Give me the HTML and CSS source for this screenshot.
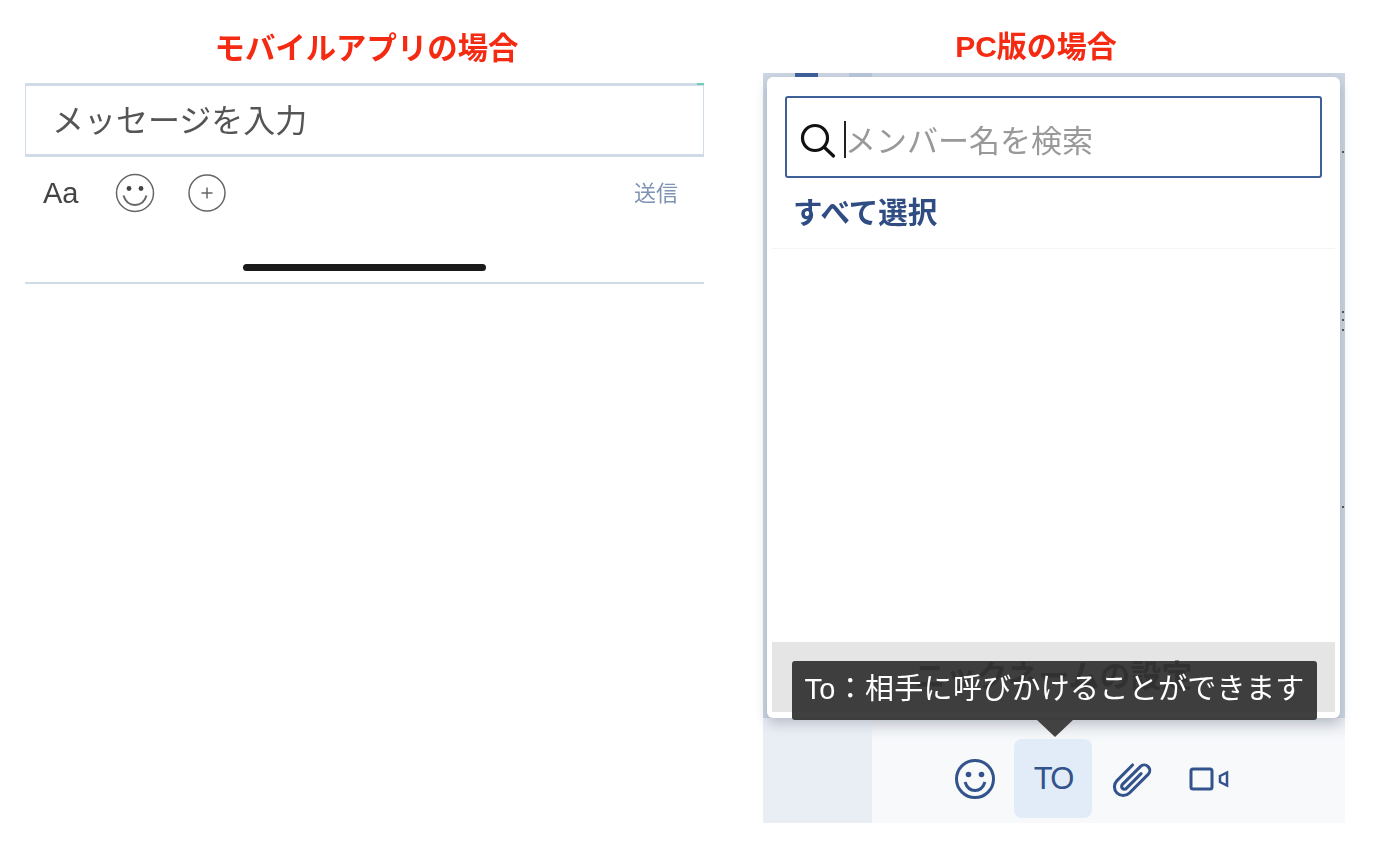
FILE: index.html
```html
<!DOCTYPE html>
<html lang="ja">
<head>
	<meta charset="UTF-8">
	<title>メッセージ入力</title>
	<link rel="stylesheet" href="styles.css">
</head>
<body>
	<div class="page">
		<div class="col col-mobile">
			<h2 class="title">モバイルアプリの場合</h2>
			<div class="mobile">
				<div class="msg-box">メッセージを入力<span class="msg-tick"></span></div>
				<div class="msg-tools">
					<span class="aa">Aa</span>
					<svg class="ico-smile" width="40" height="40" viewBox="0 0 40 40" fill="none" stroke="#666" stroke-width="1.5">
						<circle cx="20" cy="20" r="18.5"/>
						<circle cx="14" cy="15.5" r="2.400" fill="#444" stroke="none"/>
						<circle cx="26" cy="15.5" r="2.400" fill="#444" stroke="none"/>
						<path d="M8.500 22.500c2 6.500 6.500 9.500 11.500 9.500s9.500-3 11.500-9.500" stroke-width="2"/>
					</svg>
					<svg class="ico-plus" width="40" height="40" viewBox="0 0 40 40" fill="none" stroke="#666" stroke-width="1.500">
						<circle cx="20" cy="20" r="18"/>
						<path d="M20 14.500v11M14.500 20h11"/>
					</svg>
					<span class="send">送信</span>
				</div>
				<div class="home-wrap"><div class="home-bar"></div></div>
			</div>
		</div>
		<div class="col col-pc">
			<h2 class="title">PC版の場合</h2>
			<div class="pc">
				<div class="tabs">
					<span class="tab tab-on"></span>
					<span class="tab"></span>
				</div>
				<div class="pc-space"></div>
				<div class="pc-bottom">
					<div class="pc-side"></div>
					<div class="pc-tools">
						<svg class="tool-ico" width="42" height="42" viewBox="0 0 42 42" fill="none" stroke="#33538c" stroke-width="3">
							<circle cx="21" cy="21" r="18.500"/>
							<circle cx="14.500" cy="16.500" r="2.800" fill="#33538c" stroke="none"/>
							<circle cx="27.500" cy="16.500" r="2.800" fill="#33538c" stroke="none"/>
							<path d="M11 24c2 6 6 8.500 10 8.500s8-2.500 10-8.500"/>
						</svg>
						<span class="to-btn">TO</span>
						<svg class="tool-ico ico-clip" width="44" height="44" viewBox="0 0 40 40" fill="none" stroke="#33538c" stroke-width="2.800" stroke-linecap="round">
							<g transform="rotate(45 20 20)">
								<path d="M12 10v20a8 8 0 0 0 16 0V6a5 5 0 0 0-10 0v23a2.500 2.500 0 0 0 5 0V10"/>
							</g>
						</svg>
						<svg class="tool-ico ico-video" width="42" height="28" viewBox="0 0 42 28" fill="none" stroke="#33538c" stroke-width="3">
							<rect x="2" y="4" width="21" height="20" rx="2"/>
							<path d="M31 11l7-3.500v13l-7-3.500z" stroke-width="2.500"/>
						</svg>
					</div>
				</div>

				<span class="edge-dots"></span>

				<div class="popup">
					<div class="search">
						<svg class="ico-search" width="38" height="38" viewBox="0 0 38 38" fill="none" stroke="#111" stroke-width="3.200" stroke-linecap="round">
							<circle cx="16" cy="16" r="12.500"/>
							<path d="M25.500 25.500l9 8.500"/>
						</svg>
						<span class="caret"></span>
						<span class="placeholder">メンバー名を検索</span>
					</div>
					<div class="select-all">すべて選択</div>
					<div class="member-list"></div>
					<div class="nick">ニックネームの設定</div>
				</div>

				<div class="tooltip">To：相手に呼びかけることができます</div>
			</div>
		</div>
	</div>
</body>
</html>
```

FILE: styles.css
```css
* {
	margin: 0;
	padding: 0;
	box-sizing: border-box;
}
body {
	background-color: #fff;
	font-family: "Liberation Sans", "Noto Sans CJK JP", sans-serif;
}
.page {
	display: flex;
	width: 1398px;
	height: 864px;
	padding: 28px 0 0 25px;
	filter: blur(0.5px);
}
.col-mobile {
	width: 679px;
}
.col-pc {
	width: 582px;
	margin-left: 59px;
}
.title {
	height: 40px;
	line-height: 40px;
	color: #f52a12;
	text-align: center;
	font-weight: bold;
}
.col-mobile .title {
	font-size: 30.400px;
	padding-left: 4px;
}
.col-pc .title {
	font-size: 30px;
	padding-right: 36px;
	margin-top: -1px;
}

/* mobile */
.mobile {
	margin-top: 15px;
	border-bottom: 2px solid #cfdbe6;
	height: 201px;
}
.msg-box {
	position: relative;
	height: 74px;
	line-height: 70px;
	padding-left: 26px;
	font-size: 32px;
	color: #555;
	border: 1px solid #cfdbe6;
	border-top-width: 3px;
	border-bottom-width: 3px;
}
.msg-tick {
	position: absolute;
	top: -3px;
	right: -1px;
	width: 7px;
	height: 2px;
	background-color: #6fcfb4;
}
.msg-tools {
	display: flex;
	align-items: center;
	height: 72px;
	padding: 0 26px 0 18px;
}
.aa {
	font-size: 29px;
	color: #444;
	width: 37px;
}
.ico-smile {
	margin-left: 35px;
}
.ico-plus {
	margin-left: 32px;
}
.send {
	margin-left: auto;
	padding-bottom: 4px;
	font-size: 22px;
	color: #7f93b3;
}
.home-wrap {
	display: flex;
	justify-content: center;
	padding-top: 35px;
}
.home-bar {
	width: 243px;
	height: 7px;
	border-radius: 4px;
	background-color: #1a1a1a;
}

/* pc */
.pc {
	position: relative;
	display: flex;
	flex-direction: column;
	height: 750px;
	margin-top: 6px;
	background-color: #ccd5e2;
}
.tabs {
	display: flex;
	gap: 31px;
	padding-left: 32px;
	height: 4px;
}
.tab {
	width: 23px;
	height: 4px;
	background-color: #b9c5d8;
}
.tab-on {
	background-color: #3f5f99;
}
.pc-space {
	flex: 1;
}
.pc-bottom {
	display: flex;
	height: 105px;
}
.pc-side {
	width: 109px;
	background-color: #e9edf4;
}
.pc-tools {
	flex: 1;
	display: flex;
	align-items: center;
	padding: 16px 0 0 82px;
	background: linear-gradient(#e6e9ee, #f8f9fb 24px);
}
.tool-ico {
	flex: none;
}
.to-btn {
	width: 78px;
	height: 79px;
	margin-left: 18px;
	line-height: 79px;
	text-align: center;
	font-size: 31px;
	letter-spacing: -2px;
	color: #33538c;
	background-color: #e2ecf8;
	border-radius: 8px;
}
.ico-clip {
	margin-left: 17px;
}
.ico-video {
	margin-left: 36px;
}
.edge-dots {
	position: absolute;
	top: 78px;
	right: 1px;
	width: 2px;
	height: 2px;
	background-color: #555;
	box-shadow: 0 160px #555, 0 168px #555, 0 178px #555, 0 355px #555;
}
.popup {
	position: absolute;
	top: 4px;
	left: 4px;
	width: 573px;
	height: 641px;
	display: flex;
	flex-direction: column;
	padding: 0 5px 6px;
	background-color: #fff;
	border-radius: 6px;
	box-shadow: 0 6px 12px rgba(60, 70, 90, 0.25);
}
.search {
	display: flex;
	align-items: center;
	flex: none;
	width: 537px;
	height: 82px;
	margin: 19px 0 0 13px;
	padding-left: 12px;
	border: 2px solid #3f5f99;
	border-radius: 3px;
	background-color: #fff;
}
.ico-search {
	margin-top: 8px;
}
.caret {
	width: 2px;
	height: 37px;
	margin: 4px -1px 0 7px;
	background-color: #222;
}
.placeholder {
	padding-top: 2px;
	font-size: 31px;
	color: #999;
}
.select-all {
	flex: none;
	height: 71px;
	line-height: 70px;
	padding-left: 21px;
	font-size: 29.500px;
	font-weight: bold;
	color: #2f4d82;
	border-bottom: 1px solid #f4f4f4;
}
.member-list {
	flex: 1;
}
.nick {
	flex: none;
	height: 70px;
	padding-top: 15px;
	text-align: center;
	line-height: 40px;
	font-size: 31px;
	font-weight: bold;
	color: #333;
	background-color: #e5e5e5;
}
.tooltip {
	position: absolute;
	top: 588px;
	left: 29px;
	width: 525px;
	height: 59px;
	line-height: 57px;
	text-align: center;
	white-space: nowrap;
	font-size: 29px;
	letter-spacing: 0.3px;
	color: #fff;
	background-color: rgba(50, 50, 50, 0.93);
	border-radius: 3px;
}
.tooltip::after {
	content: "";
	position: absolute;
	left: 245px;
	bottom: -17px;
	border-top: 17px solid #424242;
	border-left: 18px solid transparent;
	border-right: 18px solid transparent;
}
```
